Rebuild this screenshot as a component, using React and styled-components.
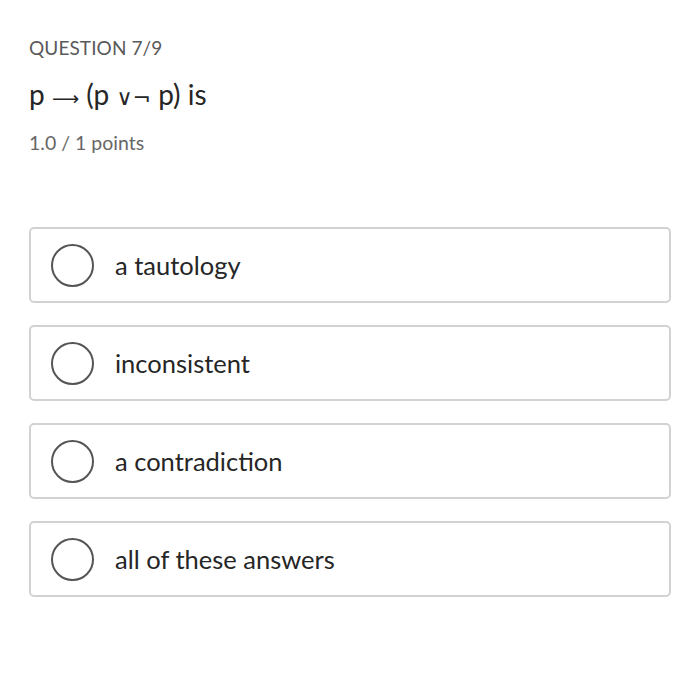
import React from "react";
import styled, { createGlobalStyle } from "styled-components";

const Global = createGlobalStyle`
  html, body { margin: 0; padding: 0; background: #fff; }
  body { font-family: Lato, "Noto Sans", sans-serif; }
`;

const Page = styled.div`
  width: 700px;
  height: 684px;
  box-sizing: border-box;
  padding: 36px 29px 0 29px;
  display: flex;
  flex-direction: column;
`;

const Counter = styled.div`
  font-size: 19px;
  color: #5a5a5a;
  line-height: 24px;
  letter-spacing: 0.1px;
`;

const Title = styled.div`
  margin-top: 16px;
  font-size: 28px;
  color: #262626;
  line-height: 36px;
`;

const Sym = styled.span`
  font-family: "DejaVu Sans", sans-serif;
  font-size: ${(p) => p.$size}px;
`;

const Points = styled.div`
  margin-top: 15px;
  font-size: 19.5px;
  color: #666;
  line-height: 24px;
`;

const Options = styled.div`
  margin-top: 72px;
  display: flex;
  flex-direction: column;
  gap: 22px;
`;

const Option = styled.label`
  box-sizing: border-box;
  height: 76px;
  border: 2px solid #d2d2d2;
  border-radius: 5px;
  display: flex;
  align-items: center;
  padding-left: 20px;
  gap: 21px;
`;

const Radio = styled.span`
  box-sizing: border-box;
  width: 43px;
  height: 43px;
  border-radius: 50%;
  border: 2px solid #555;
  flex: none;
`;

const OptionText = styled.span`
  font-size: 25.5px;
  color: #262626;
`;

const answers = ["a tautology", "inconsistent", "a contradiction", "all of these answers"];

export default function App() {
  return (
    <>
      <Global />
      <Page>
        <Counter>QUESTION 7/9</Counter>
        <Title>
          p <Sym $size={19}>⟶</Sym> (p <Sym $size={22}>∨¬</Sym> p) is
        </Title>
        <Points>1.0 / 1 points</Points>
        <Options>
          {answers.map((a) => (
            <Option key={a}>
              <Radio />
              <OptionText>{a}</OptionText>
            </Option>
          ))}
        </Options>
      </Page>
    </>
  );
}
